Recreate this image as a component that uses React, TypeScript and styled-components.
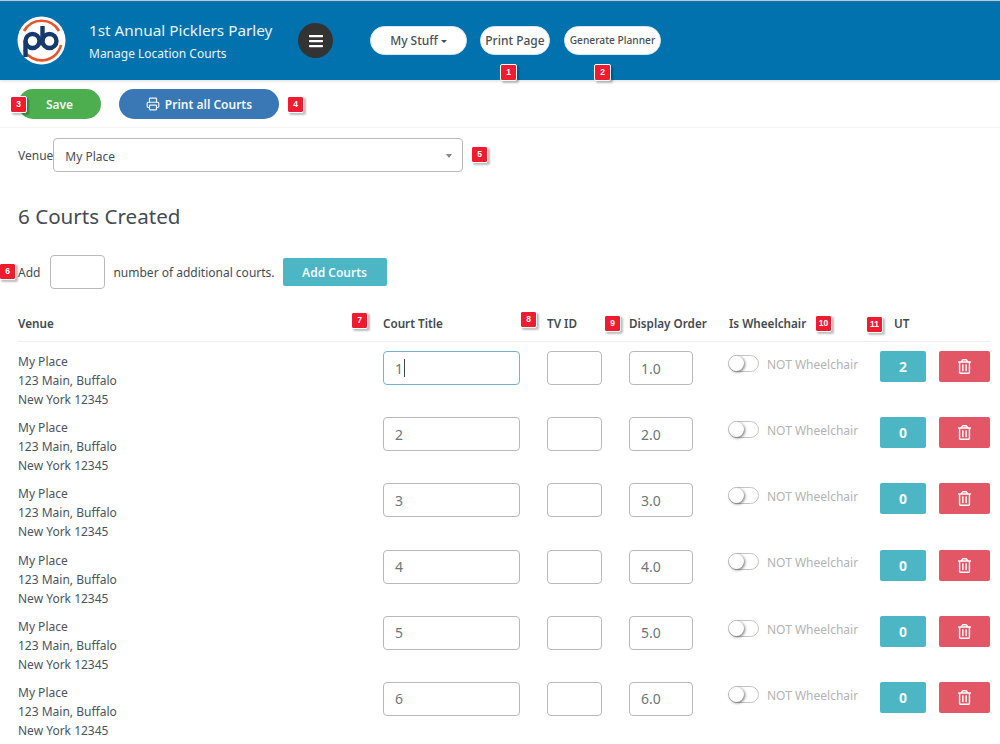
import React from "react";
import styled, { createGlobalStyle } from "styled-components";
import { Printer } from "lucide-react";
import { FaBars, FaRegTrashAlt } from "react-icons/fa";

const Global = createGlobalStyle`
  html, body { margin: 0; padding: 0; background: #fff; overflow: hidden; height: 744px; }
  * { box-sizing: border-box; }
  body { font-family: "Noto Sans", "Open Sans", sans-serif; font-size: 12px; color: #444c55; }
`;
const Page = styled.div`position: relative; width: 1000px; height: 744px; overflow: hidden;`;
const Header = styled.header`
  height: 80px; background: #0272ae; border-top: 1px solid #b5c9d6;
  display: flex; align-items: center; padding-left: 17px;
  box-shadow: 0 1px 3px rgba(0,0,0,.15);
`;
const LogoBox = styled.div`width: 49px; height: 49px; flex: none; margin-right: 23px;`;
const Titles = styled.div`width: 209px; color: #eaf3f8; flex: none;`;
const Title = styled.div`font-size: 15.3px; line-height: 22px;`;
const Sub = styled.div`font-size: 12px; line-height: 18px; margin-top: 4px;`;
const Burger = styled.div`
  width: 35px; height: 35px; border-radius: 50%; background: #333; color: #fff; flex: none;
  display: flex; align-items: center; justify-content: center; margin-right: 37px;
`;
const Pills = styled.div`display: flex; align-items: center;`;
const Pill = styled.button<{ $w: number; $gap?: number; $small?: boolean }>`
  width: ${p => p.$w}px; height: 29px; border: 1px solid #dbe7ee; border-radius: 15px; background: #fff;
  margin-right: ${p => p.$gap ?? 0}px;
  color: #4a4f55; font: 500 ${p => (p.$small ? "10.2px" : "12px")} "Noto Sans", sans-serif; flex: none;
  padding: 0 0 ${p => (p.$small ? 2 : 0)}px; display: flex; align-items: center; justify-content: center; gap: 3px;
`;
const PillCaret = styled.span`
  width: 0; height: 0; border-left: 3px solid transparent; border-right: 3px solid transparent; border-top: 3px solid #4a4f55; margin-top: 2px;
`;
const ActionBar = styled.div`
  height: 48px; display: flex; align-items: center; padding: 1px 0 0 18px; gap: 18px;
  border-bottom: 1px solid #f4f4f4;
`;
const Round = styled.button<{ $bg: string; $w: number }>`
  width: ${p => p.$w}px; height: 30px; border: 0; border-radius: 15px; background: ${p => p.$bg}; color: #f2f6f4;
  font: 600 12px "Noto Sans", sans-serif; display: flex; align-items: center; justify-content: center; gap: 5px; padding: 0;
`;
const VenueRow = styled.div`display: flex; align-items: center; padding: 10px 0 0 18px; height: 44px;`;
const Select = styled.div`
  width: 410px; height: 34px; border: 1px solid #b9b9b9; border-radius: 4px;
  display: flex; align-items: center; justify-content: space-between; padding: 2px 10px 0 11px; font-size: 12px; color: #4a5058;
`;
const Caret = styled.span`
  width: 0; height: 0; border-left: 3.5px solid transparent; border-right: 3.5px solid transparent; border-top: 4px solid #888;
`;
const Heading = styled.h2`font-size: 20.6px; font-weight: 400; line-height: 28px; margin: 30px 0 0 18px; color: #444b52;`;
const AddRow = styled.div`display: flex; align-items: center; height: 34px; padding-left: 18px; margin-top: 25px;`;
const SmallInput = styled.div`width: 55px; height: 34px; margin: 0 8px 0 10px; border: 1px solid #b9b9b9; border-radius: 4px; flex: none;`;
const AddBtn = styled.button`
  width: 104px; height: 28px; margin-left: 8px; border: 0; border-radius: 2px; background: #4db6c4; color: #f3fafb;
  font: 600 12px "Noto Sans", sans-serif; padding: 0;
`;
const GridRow = styled.div<{ $head?: boolean }>`
  display: grid; grid-template-columns: 365px 164px 82px 100px 151px 59px 51px;
  margin-left: 18px; width: 972px;
  ${p => p.$head
    ? "height: 37px; align-items: center; border-bottom: 1px solid #eee; font-weight: 600; font-size: 11.7px; color: #434a50; margin-top: 16px; padding-bottom: 1px;"
    : "height: 66.2px; padding-top: 9px; align-items: start;"}
`;
const UtHead = styled.span`margin-left: 14px;`;
const Address = styled.div`font-size: 12px; line-height: 19px; color: #4d545b; margin-top: 1px;`;
const Field = styled.div<{ $w: number; $focus?: boolean }>`
  width: ${p => p.$w}px; height: 34px; border: 1px solid ${p => (p.$focus ? "#6fb3d9" : "#b9b9b9")}; border-radius: 4px;
  display: flex; align-items: center; padding-left: 11px; font-size: 14px; color: #6f757b;
`;
const Cursor = styled.span`width: 1px; height: 18px; background: #444; margin-left: 1px;`;
const WheelCell = styled.div`display: flex; align-items: center; height: 24px; gap: 8px; color: #b3b3b3; font-size: 12px; margin-top: 1.4px; margin-left: -1px;`;
const Toggle = styled.span`
  width: 31px; height: 17px; border: 1px solid #c4c4c4; border-radius: 9px; flex: none; display: flex; align-items: center; margin-top: -2px;
`;
const Knob = styled.span`width: 15px; height: 15px; border-radius: 50%; background: #fff; box-shadow: 1px 1px 3px rgba(0,0,0,.55);`;
const UtBtn = styled.button`
  width: 46px; height: 31px; border: 0; border-radius: 2px; background: #4db6c4; color: #f3fafb; font: 700 14px "Noto Sans", sans-serif; padding: 0;
`;
const DelBtn = styled.button`
  width: 51px; height: 31px; border: 0; border-radius: 2px; background: #e25665; color: #fff; padding: 0;
  display: flex; align-items: center; justify-content: center;
`;
const Badge = styled.span<{ $x: number; $y: number }>`
  position: absolute; left: ${p => p.$x}px; top: ${p => p.$y}px; width: 15px; height: 15px; background: #ee1c2e; color: #fff;
  outline: 1px solid #fff; box-shadow: 2px 2px 2px 1px rgba(0,0,0,.25); border-radius: 1px;
  font: 700 8.5px/15px "Liberation Sans", sans-serif; text-align: center;
`;

const Logo = () => (
  <svg viewBox="0 0 49 49" width="49" height="49">
    <circle cx="24.5" cy="24.5" r="24" fill="#fff" />
    <path d="M7 15 A20 20 0 0 1 42 15 M44 29 A20 20 0 0 1 7 34" fill="none" stroke="#e4572e" strokeWidth="2.6" />
    <circle cx="15.5" cy="25" r="7" fill="#fff" stroke="#163a6b" strokeWidth="4.4" />
    <circle cx="32.5" cy="25" r="7" fill="#fff" stroke="#163a6b" strokeWidth="4.4" />
    <path d="M8.5 25 V41" stroke="#163a6b" strokeWidth="4.4" fill="none" />
    <path d="M25.5 25 V10" stroke="#163a6b" strokeWidth="4.4" fill="none" />
  </svg>
);

const courts = [
  { t: "1", o: "1.0", u: "2" }, { t: "2", o: "2.0", u: "0" }, { t: "3", o: "3.0", u: "0" },
  { t: "4", o: "4.0", u: "0" }, { t: "5", o: "5.0", u: "0" }, { t: "6", o: "6.0", u: "0" },
];
const badges: [string, number, number][] = [
  ["1", 501, 65], ["2", 595, 65], ["3", 11, 97], ["4", 288, 97], ["5", 472, 147], ["6", 0, 264],
  ["7", 352, 313], ["8", 521, 312], ["9", 605, 316], ["10", 816, 316], ["11", 867, 317],
];

export default function App() {
  return (
    <Page>
      <Global />
      <Header>
        <LogoBox><Logo /></LogoBox>
        <Titles>
          <Title>1st Annual Picklers Parley</Title>
          <Sub>Manage Location Courts</Sub>
        </Titles>
        <Burger><FaBars size={16} /></Burger>
        <Pills>
          <Pill $w={97} $gap={13}>My Stuff<PillCaret /></Pill>
          <Pill $w={70} $gap={14}>Print Page</Pill>
          <Pill $w={97} $small>Generate Planner</Pill>
        </Pills>
      </Header>
      <ActionBar>
        <Round $bg="#4cae4f" $w={83}>Save</Round>
        <Round $bg="#3a78b5" $w={160}><Printer size={14} />Print all Courts</Round>
      </ActionBar>
      <VenueRow>
        Venue
        <Select>My Place<Caret /></Select>
      </VenueRow>
      <Heading>6 Courts Created</Heading>
      <AddRow>
        Add<SmallInput />number of additional courts.<AddBtn>Add Courts</AddBtn>
      </AddRow>
      <GridRow $head>
        <span>Venue</span><span>Court Title</span><span>TV ID</span><span>Display Order</span><span>Is Wheelchair</span><UtHead>UT</UtHead><span />
      </GridRow>
      {courts.map((c, i) => (
        <GridRow key={c.t}>
          <Address>My Place<br />123 Main, Buffalo<br />New York 12345</Address>
          <Field $w={137} $focus={i === 0}>{c.t}{i === 0 && <Cursor />}</Field>
          <Field $w={55} />
          <Field $w={64}>{c.o}</Field>
          <WheelCell><Toggle><Knob /></Toggle>NOT Wheelchair</WheelCell>
          <UtBtn>{c.u}</UtBtn>
          <DelBtn><FaRegTrashAlt size={15} /></DelBtn>
        </GridRow>
      ))}
      {badges.map(([n, x, y]) => <Badge key={n} $x={x} $y={y}>{n}</Badge>)}
    </Page>
  );
}
